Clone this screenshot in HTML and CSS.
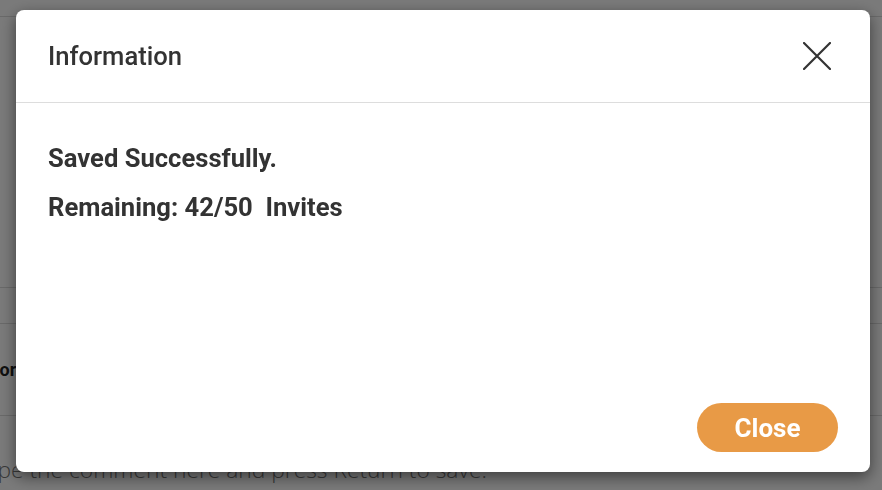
FILE: index.html
```html
<!DOCTYPE html>
<html lang="en">
<head>
<meta charset="utf-8">
<title>Information</title>
<link rel="stylesheet" href="styles.css">
</head>
<body>
  <div class="page">
    <div class="bg-row bg-top"></div>
    <div class="bg-row bg-main"></div>
    <div class="bg-row bg-thin"></div>
    <div class="bg-row bg-label"><span class="bg-label-text">Moderator</span></div>
    <div class="bg-comment">Type the comment here and press Return to save.</div>
  </div>
  <div class="backdrop"></div>
  <div class="modal" role="dialog" aria-labelledby="modal-title">
    <div class="modal-header">
      <h2 class="modal-title" id="modal-title">Information</h2>
      <button class="icon-close" aria-label="Close">
        <svg width="28" height="28" viewBox="0 0 28 28"><path d="M1 1 L27 27 M27 1 L1 27" stroke="#333" stroke-width="2.2" stroke-linecap="round" fill="none"/></svg>
      </button>
    </div>
    <div class="modal-body">
      <p class="msg">Saved Successfully.</p>
      <p class="msg">Remaining: 42/50&nbsp; Invites</p>
    </div>
    <div class="modal-footer">
      <button class="btn-close">Close</button>
    </div>
  </div>
</body>
</html>
```
FILE: styles.css
```css
html, body {
  margin: 0;
  padding: 0;
}
body {
  width: 882px;
  height: 490px;
  overflow: hidden;
  background: #ffffff;
  font-family: Roboto, "Liberation Sans", Arial, sans-serif;
  color: #333;
}
.page {
  display: flex;
  flex-direction: column;
}
.bg-row {
  border-bottom: 1px solid #dcdcdc;
}
.bg-top { height: 16px; }
.bg-main { height: 270px; }
.bg-thin { height: 35px; }
.bg-label {
  height: 91px;
  display: flex;
  align-items: center;
  overflow: hidden;
}
.bg-label-text {
  margin-left: -68px;
  font-weight: 700;
  font-size: 18px;
  color: #222;
  white-space: nowrap;
}
.bg-comment {
  margin-top: 41px;
  margin-left: -25px;
  font-family: "Open Sans", sans-serif;
  font-weight: 300;
  font-size: 22.8px;
  line-height: 26px;
  color: #777;
  white-space: nowrap;
}
.backdrop {
  position: fixed;
  inset: 0;
  background: rgba(0, 0, 0, 0.52);
}
.modal {
  position: fixed;
  left: 16px;
  top: 10px;
  width: 854px;
  height: 462px;
  background: #fff;
  border-radius: 8px;
  box-shadow: 0 5px 15px rgba(0, 0, 0, 0.5);
  display: flex;
  flex-direction: column;
  box-sizing: border-box;
}
.modal-header {
  height: 93px;
  box-sizing: border-box;
  border-bottom: 1px solid #dddddd;
  display: flex;
  align-items: center;
  justify-content: space-between;
  padding: 0 39px 1px 32px;
}
.modal-title {
  margin: 0;
  font-size: 25.6px;
  font-weight: 500;
  color: #333;
}
.icon-close {
  border: 0;
  background: none;
  padding: 0;
  width: 28px;
  height: 28px;
  display: block;
  cursor: pointer;
}
.icon-close svg { display: block; }
.modal-body {
  padding: 40px 32px 0;
}
.msg {
  margin: 0 0 18px;
  font-size: 25.6px;
  line-height: 31px;
  font-weight: 700;
  color: #333;
}
.modal-footer {
  margin-top: auto;
  padding: 0 32px 20px;
  display: flex;
  justify-content: flex-end;
}
.btn-close {
  width: 141px;
  height: 49px;
  border: 0;
  border-radius: 25px;
  background: #e89a46;
  color: #fff;
  font-family: Roboto, "Liberation Sans", Arial, sans-serif;
  font-size: 26px;
  font-weight: 700;
  cursor: pointer;
}
```
